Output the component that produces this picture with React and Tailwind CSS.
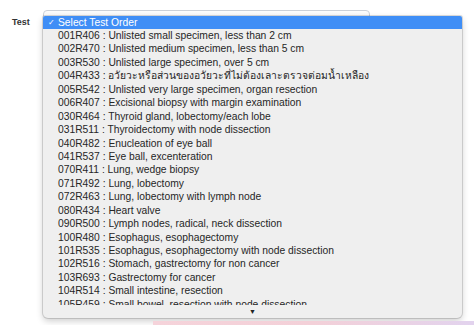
import React from 'react';

const items = [
  '001R406 : Unlisted small specimen, less than 2 cm',
  '002R470 : Unlisted medium specimen, less than 5 cm',
  '003R530 : Unlisted large specimen, over 5 cm',
  '004R433 : อวัยวะหรือส่วนของอวัยวะที่ไม่ต้องเลาะตรวจต่อมน้ำเหลือง',
  '005R542 : Unlisted very large specimen, organ resection',
  '006R407 : Excisional biopsy with margin examination',
  '030R464 : Thyroid gland, lobectomy/each lobe',
  '031R511 : Thyroidectomy with node dissection',
  '040R482 : Enucleation of eye ball',
  '041R537 : Eye ball, excenteration',
  '070R411 : Lung, wedge biopsy',
  '071R492 : Lung, lobectomy',
  '072R463 : Lung, lobectomy with lymph node',
  '080R434 : Heart valve',
  '090R500 : Lymph nodes, radical, neck dissection',
  '100R480 : Esophagus, esophagectomy',
  '101R535 : Esophagus, esophagectomy with node dissection',
  '102R516 : Stomach, gastrectomy for non cancer',
  '103R693 : Gastrectomy for cancer',
  '104R514 : Small intestine, resection',
  '105R459 : Small bowel, resection with node dissection',
];

export default function App() {
  return (
    <div className="relative h-[325px] w-[474px] overflow-hidden bg-white font-['Liberation_Sans','Noto_Sans',Arial,sans-serif] text-[#262626]">
      <div className="flex items-start pl-[12px] pt-[16px]">
        <span className="flex h-[13.45px] w-[31px] items-center text-[9px] font-bold leading-none text-[#333]">
          Test
        </span>

        <div className="relative">
          {/* the closed select sitting behind the menu */}
          <div className="absolute left-0 top-[-6px] h-[20px] w-[327px] rounded-[4px] border border-[#cbd0d8] bg-gradient-to-b from-[#fcfcfc] to-[#eef0f3]" />

          {/* open menu */}
          <div className="relative flex w-[419px] flex-col overflow-hidden rounded-b-[5px] rounded-t-[2px] bg-[#efefef] shadow-[0_0_0_1px_rgba(0,0,0,0.13),0_3px_7px_rgba(0,0,0,0.2)]">
            <div className="h-[289px] overflow-hidden">
              <div className="flex h-[13.45px] items-center bg-[#3f8ef6] text-[10.3px] leading-none text-white">
                <span className="w-[15px] pl-[5px] text-[8px]">✓</span>
                <span>Select Test Order</span>
              </div>
              {items.map((item) => (
                <div
                  key={item}
                  className="flex h-[13.45px] items-center whitespace-nowrap pl-[15px] text-[10.3px] leading-none"
                >
                  {item}
                </div>
              ))}
            </div>
            <div className="flex h-[13px] items-center justify-center text-[7px] leading-none text-[#222]">
              ▼
            </div>
          </div>
        </div>
      </div>

      <div className="absolute bottom-0 left-[153px] h-[4px] w-[321px] bg-gradient-to-r from-[#f5d3da] via-[#f3d0d8] to-[#e2d3ee]" />
    </div>
  );
}
